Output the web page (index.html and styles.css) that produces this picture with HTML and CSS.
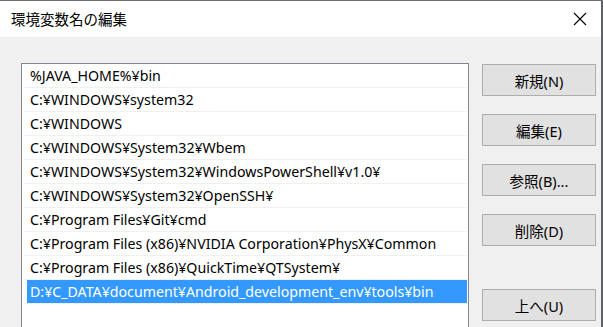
FILE: index.html
```html
<!DOCTYPE html>
<html lang="ja">
<head>
<meta charset="utf-8">
<link rel="stylesheet" href="styles.css">
</head>
<body>
<div class="window">
  <div class="titlebar">
    <span class="title">環境変数名の編集</span>
    <span class="close">
      <svg width="14" height="14" viewBox="0 0 14 14"><path d="M1 1 L13 13 M13 1 L1 13" stroke="#000" stroke-width="1.1" fill="none"/></svg>
    </span>
  </div>
  <div class="body">
    <div class="listbox">
      <div class="row">%JAVA_HOME%¥bin</div>
      <div class="row">C:¥WINDOWS¥system32</div>
      <div class="row">C:¥WINDOWS</div>
      <div class="row">C:¥WINDOWS¥System32¥Wbem</div>
      <div class="row">C:¥WINDOWS¥System32¥WindowsPowerShell¥v1.0¥</div>
      <div class="row">C:¥WINDOWS¥System32¥OpenSSH¥</div>
      <div class="row">C:¥Program Files¥Git¥cmd</div>
      <div class="row">C:¥Program Files (x86)¥NVIDIA Corporation¥PhysX¥Common</div>
      <div class="row">C:¥Program Files (x86)¥QuickTime¥QTSystem¥</div>
      <div class="row selected">D:¥C_DATA¥document¥Android_development_env¥tools¥bin</div>
    </div>
    <div class="buttons">
      <button class="btn">新規(N)</button>
      <button class="btn">編集(E)</button>
      <button class="btn">参照(B)...</button>
      <button class="btn">削除(D)</button>
      <button class="btn gap">上へ(U)</button>
    </div>
  </div>
</div>
</body>
</html>
```

FILE: styles.css
```css
* { box-sizing: border-box; }
html, body { margin: 0; padding: 0; }
body {
  width: 603px;
  height: 327px;
  overflow: hidden;
  font-family: "Noto Sans", "Noto Sans CJK JP", sans-serif;
  background: #f0f0f0;
}
.window {
  height: 327px;
  border-top: 1px solid #6b6e73;
  border-right: 2px solid #5f6368;
  display: flex;
  flex-direction: column;
  overflow: hidden;
}
.titlebar {
  height: 36px;
  background: #fff;
  display: flex;
  align-items: center;
  justify-content: space-between;
  padding: 0 14px 0 11px;
  flex: none;
}
.title {
  font-family: "Noto Sans CJK JP", sans-serif;
  font-size: 14.5px;
  color: #000;
  margin-top: -1px;
}
.close { display: flex; margin-top: -1px; }
.body {
  flex: 1;
  display: flex;
  padding: 26px 0 0 21px;
  gap: 13px;
  min-height: 0;
}
.listbox {
  width: 448px;
  height: 264px;
  background: #fff;
  border: 1px solid #828790;
  border-bottom: none;
  padding: 0 1px 0 3px;
  overflow: hidden;
}
.row {
  height: 24px;
  border-bottom: 1px solid #f0f0f0;
  font-size: 14.2px;
  line-height: 23px;
  padding-left: 5px;
  color: #000;
  white-space: nowrap;
  overflow: hidden;
}
.row.selected {
  background: #3399ff;
  color: #fff;
  margin-left: 2px;
  padding-left: 3px;
}
.buttons {
  display: flex;
  flex-direction: column;
  gap: 18px;
  padding-top: 1px;
}
.btn {
  width: 114px;
  height: 32px;
  background: #e1e1e1;
  border: 1px solid #adadad;
  font-family: "Noto Sans", "Noto Sans CJK JP", sans-serif;
  font-size: 14.5px;
  color: #000;
  padding: 0;
  margin: 0;
  flex: none;
}
.btn.gap { margin-top: 25px; }
```
